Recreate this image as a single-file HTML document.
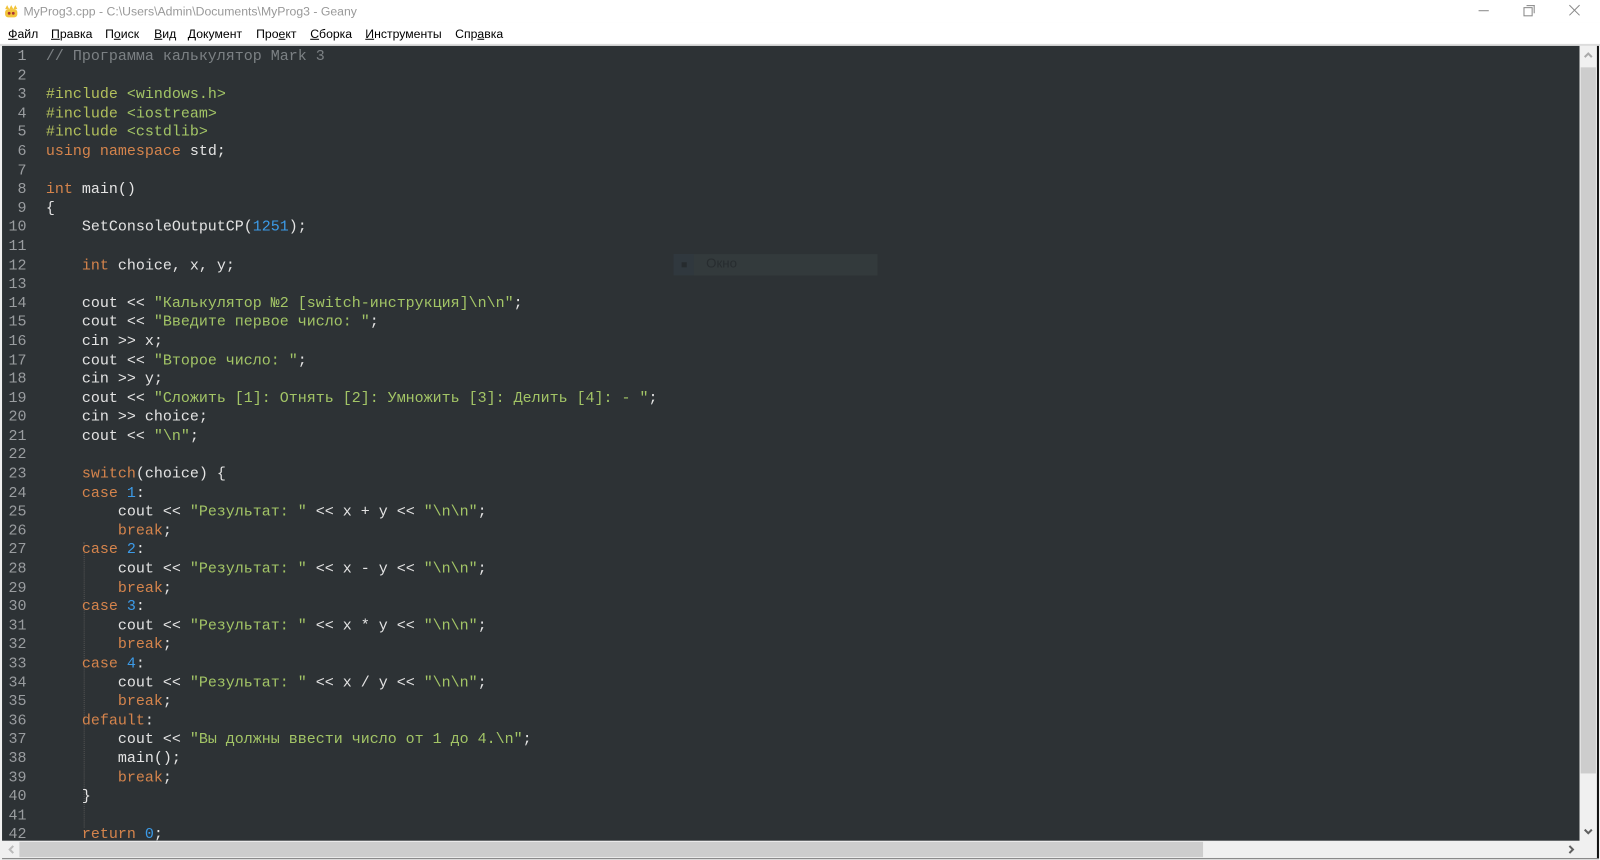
<!DOCTYPE html>
<html><head><meta charset="utf-8"><style>
body{margin:0;width:1600px;height:860px;background:#f0f0f0;overflow:hidden;font-family:"Segoe UI","Liberation Sans",sans-serif}
#w{position:absolute;left:0;top:0;width:1568px;height:843px;transform:scale(1.020408);transform-origin:0 0}
.title{position:absolute;left:0;top:0;width:1568px;height:22px;background:#fff;font-size:12px;color:#999}
.title span{position:absolute;left:23px;top:4px}
.menu{position:absolute;left:0;top:22px;width:1568px;height:22px;background:#fff;font-size:12px;color:#000}
.menu span{position:absolute;top:4px}
.sep{position:absolute;left:0;top:43px;width:1568px;height:2px;background:#dcdcdc}
.ed{position:absolute;left:2px;top:45px;width:1546px;height:779px;background:#2d3235;overflow:hidden}
.code{position:absolute;left:0;top:2px;font-family:"Liberation Mono","Noto Sans CJK SC",monospace;font-size:14.7px;line-height:18.6px;white-space:pre;color:#e4e4e4}
.ln{display:inline-block;width:24px;text-align:right;color:#9a9da0;margin-right:19px}
.k{color:#d5844c}.p{color:#b3c05c}.s{color:#a3c566}.n{color:#3c9be8}.c{color:#7c8184}
.vs{position:absolute;left:1548px;top:45px;width:17px;height:779px;background:#f0f0f0}
.hs{position:absolute;left:2px;top:824px;width:1546px;height:17px;background:#f0f0f0}
.brd{position:absolute;left:1565px;top:45px;width:2px;height:796px;background:#111}
.brb{position:absolute;left:2px;top:841px;width:1565px;height:1px;background:#777}
.guide{position:absolute;width:0;border-left:1px dotted #555}
</style></head><body><div id="w">
<div class="title"><svg style="position:absolute;left:3px;top:4px" width="16" height="14"><rect x="2" y="5" width="12" height="8" rx="3" fill="#f2c43a"/><circle cx="6" cy="9" r="1.4" fill="#a33"/><circle cx="10" cy="9" r="1.4" fill="#a33"/><path d="M2 5 L4 1 L6 5 L8 1 L10 5 L12 1 L14 5" fill="#f2c43a"/></svg><span>MyProg3.cpp - C:\Users\Admin\Documents\MyProg3 - Geany</span>
<div style="position:absolute;left:1449px;top:10px;width:10px;height:1px;background:#888"></div>
<div style="position:absolute;left:1493px;top:7px;width:7px;height:7px;border:1px solid #888"></div>
<div style="position:absolute;left:1496px;top:5px;width:7px;height:7px;border-top:1px solid #888;border-right:1px solid #888"></div>
<svg style="position:absolute;left:1537px;top:4px" width="12" height="12"><path d="M1 1L11 11M11 1L1 11" stroke="#888" stroke-width="1"/></svg>
</div>
<div class="menu"><span style="left:8px"><u>Ф</u>айл</span><span style="left:50px"><u>П</u>равка</span><span style="left:103px">П<u>о</u>иск</span><span style="left:151px"><u>В</u>ид</span><span style="left:184px"><u>Д</u>окумент</span><span style="left:251px">Про<u>е</u>кт</span><span style="left:304px"><u>С</u>борка</span><span style="left:358px"><u>И</u>нструменты</span><span style="left:446px">Спр<u>а</u>вка</span></div>
<div class="sep"></div>
<div class="ed">
<div class="guide" style="left:80px;top:486px;height:280px"></div>
<div style="position:absolute;left:658px;top:204px;width:200px;height:21px;background:#333a3c"><div style="position:absolute;left:0;top:0;width:20px;height:21px;background:#30383e"></div><div style="position:absolute;left:8px;top:8px;width:5px;height:5px;background:#262b2e"></div><span style="position:absolute;left:32px;top:1px;font-size:13px;color:#272c2f">Окно</span></div>
<div class="code"><span class="ln">1</span><span class="c">// Программа калькулятор Mark 3</span>
<span class="ln">2</span>
<span class="ln">3</span><span class="p">#include</span> <span class="s">&lt;windows.h&gt;</span>
<span class="ln">4</span><span class="p">#include</span> <span class="s">&lt;iostream&gt;</span>
<span class="ln">5</span><span class="p">#include</span> <span class="s">&lt;cstdlib&gt;</span>
<span class="ln">6</span><span class="k">using namespace</span> std;
<span class="ln">7</span>
<span class="ln">8</span><span class="k">int</span> main()
<span class="ln">9</span>{
<span class="ln">10</span>    SetConsoleOutputCP(<span class="n">1251</span>);
<span class="ln">11</span>
<span class="ln">12</span>    <span class="k">int</span> choice, x, y;
<span class="ln">13</span>
<span class="ln">14</span>    cout &lt;&lt; <span class="s">"Калькулятор №2 [switch-инструкция]\n\n"</span>;
<span class="ln">15</span>    cout &lt;&lt; <span class="s">"Введите первое число: "</span>;
<span class="ln">16</span>    cin &gt;&gt; x;
<span class="ln">17</span>    cout &lt;&lt; <span class="s">"Второе число: "</span>;
<span class="ln">18</span>    cin &gt;&gt; y;
<span class="ln">19</span>    cout &lt;&lt; <span class="s">"Сложить [1]: Отнять [2]: Умножить [3]: Делить [4]: - "</span>;
<span class="ln">20</span>    cin &gt;&gt; choice;
<span class="ln">21</span>    cout &lt;&lt; <span class="s">"\n"</span>;
<span class="ln">22</span>
<span class="ln">23</span>    <span class="k">switch</span>(choice) {
<span class="ln">24</span>    <span class="k">case</span> <span class="n">1</span>:
<span class="ln">25</span>        cout &lt;&lt; <span class="s">"Результат: "</span> &lt;&lt; x + y &lt;&lt; <span class="s">"\n\n"</span>;
<span class="ln">26</span>        <span class="k">break</span>;
<span class="ln">27</span>    <span class="k">case</span> <span class="n">2</span>:
<span class="ln">28</span>        cout &lt;&lt; <span class="s">"Результат: "</span> &lt;&lt; x - y &lt;&lt; <span class="s">"\n\n"</span>;
<span class="ln">29</span>        <span class="k">break</span>;
<span class="ln">30</span>    <span class="k">case</span> <span class="n">3</span>:
<span class="ln">31</span>        cout &lt;&lt; <span class="s">"Результат: "</span> &lt;&lt; x * y &lt;&lt; <span class="s">"\n\n"</span>;
<span class="ln">32</span>        <span class="k">break</span>;
<span class="ln">33</span>    <span class="k">case</span> <span class="n">4</span>:
<span class="ln">34</span>        cout &lt;&lt; <span class="s">"Результат: "</span> &lt;&lt; x / y &lt;&lt; <span class="s">"\n\n"</span>;
<span class="ln">35</span>        <span class="k">break</span>;
<span class="ln">36</span>    <span class="k">default</span>:
<span class="ln">37</span>        cout &lt;&lt; <span class="s">"Вы должны ввести число от 1 до 4.\n"</span>;
<span class="ln">38</span>        main();
<span class="ln">39</span>        <span class="k">break</span>;
<span class="ln">40</span>    }
<span class="ln">41</span>
<span class="ln">42</span>    <span class="k">return</span> <span class="n">0</span>;
</div></div>
<div class="vs"><div style="position:absolute;left:1px;top:21px;width:15px;height:692px;background:#cdcdcd"></div><svg style="position:absolute;left:4px;top:6px" width="9" height="6"><path d="M1 5L4.5 1.5L8 5" stroke="#aaa" stroke-width="2" fill="none"/></svg><svg style="position:absolute;left:4px;top:767px" width="9" height="6"><path d="M1 1L4.5 4.5L8 1" stroke="#606060" stroke-width="2" fill="none"/></svg></div>
<div class="hs"><div style="position:absolute;left:17px;top:1px;width:1160px;height:15px;background:#cdcdcd"></div><svg style="position:absolute;left:6px;top:4px" width="6" height="9"><path d="M5 1L1.5 4.5L5 8" stroke="#bbb" stroke-width="2" fill="none"/></svg><svg style="position:absolute;left:1535px;top:4px" width="6" height="9"><path d="M1 1L4.5 4.5L1 8" stroke="#606060" stroke-width="2" fill="none"/></svg></div>
<div class="brd"></div><div class="brb"></div>
</div></body></html>
